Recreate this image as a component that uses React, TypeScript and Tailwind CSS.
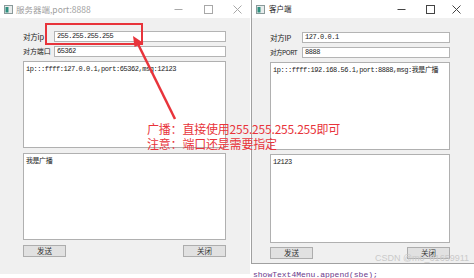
import React from "react";

const CJK = '"Noto Sans CJK SC", "Noto Sans", sans-serif';
const MONO = '"Liberation Mono", "Noto Sans CJK SC", monospace';

function WinIcon() {
  return (
    <svg width="9" height="9" viewBox="0 0 9 9" className="shrink-0">
      <rect x="0.5" y="0.5" width="8" height="8" fill="#e8ecec" stroke="#8a9a9a" />
      <rect x="1.5" y="2" width="3" height="5.5" fill="#2f8f7f" />
    </svg>
  );
}

function Controls({ color, gaps }: { color: string; gaps: [number, number] }) {
  return (
    <div className="flex items-center">
      <svg width="9" height="9" viewBox="0 0 9 9">
        <line x1="0.5" y1="4.5" x2="8.5" y2="4.5" stroke={color} strokeWidth="1" />
      </svg>
      <div style={{ width: gaps[0] }} />
      <svg width="9" height="9" viewBox="0 0 9 9">
        <rect x="0.5" y="0.5" width="8" height="8" fill="none" stroke={color} strokeWidth="1" />
      </svg>
      <div style={{ width: gaps[1] }} />
      <svg width="9" height="9" viewBox="0 0 9 9">
        <line x1="0.5" y1="0.5" x2="8.5" y2="8.5" stroke={color} strokeWidth="1" />
        <line x1="8.5" y1="0.5" x2="0.5" y2="8.5" stroke={color} strokeWidth="1" />
      </svg>
    </div>
  );
}

function Field({
  label,
  value,
  labelW,
  labelCls,
}: {
  label: string;
  value: string;
  labelW: number;
  labelCls: string;
}) {
  return (
    <div className="flex items-center h-[11px]">
      <div className="shrink-0 h-full flex items-center" style={{ width: labelW }}>
        <span className={`${labelCls} leading-none text-[#222] whitespace-nowrap`} style={{ fontFamily: CJK }}>
          {label}
        </span>
      </div>
      <div className="flex-1 h-full bg-white border border-[#b4b4b4] flex items-center pl-[2px]">
        <span
          className="text-[7px] leading-none text-[#222] whitespace-nowrap tracking-[-0.45px]"
          style={{ fontFamily: MONO }}
        >
          {value}
        </span>
      </div>
    </div>
  );
}

function Area({ text, h }: { text: string; h: number }) {
  return (
    <div className="bg-white border border-[#b0b0b0] px-[2px] pt-[3px]" style={{ height: h }}>
      <div
        className="text-[7px] leading-[9px] text-[#222] whitespace-nowrap tracking-[-0.45px]"
        style={{ fontFamily: MONO }}
      >
        {text}
      </div>
    </div>
  );
}

function Btn({ label }: { label: string }) {
  return (
    <div
      className="w-[43px] h-[12px] bg-[#e1e1e1] border border-[#adadad] flex items-center justify-center text-[7.5px] leading-none text-[#333]"
      style={{ fontFamily: CJK }}
    >
      {label}
    </div>
  );
}

export default function App() {
  return (
    <div className="relative w-[474px] h-[278px] bg-white overflow-hidden">
      {/* Left window (server) */}
      <div className="absolute left-0 top-0 w-[250px] h-[274px] bg-[#f0f0f0] flex flex-col">
        <div className="h-[18px] bg-white flex items-center pl-[4px] pr-[8px]">
          <WinIcon />
          <span
            className="ml-[3px] text-[8.5px] leading-none text-[#a0a0a0] whitespace-nowrap"
            style={{ fontFamily: CJK }}
          >
            服务器端,port:8888
          </span>
          <div className="flex-1" />
          <Controls color="#a8a8a8" gaps={[21, 20]} />
        </div>
        <div className="pl-[23px] pr-[24px] pt-[13px] flex flex-col">
          <div className="flex flex-col gap-[4px]">
            <Field label="对方ip" value="255.255.255.255" labelW={31} labelCls="text-[7.5px] tracking-[-0.2px]" />
            <Field label="对方端口" value="65362" labelW={31} labelCls="text-[7px] tracking-[-0.1px]" />
          </div>
          <div className="mt-[4px]">
            <Area text="ip:::ffff:127.0.0.1,port:65362,msg:12123" h={87} />
          </div>
          <div className="mt-[5px]">
            <Area text="我是广播" h={87} />
          </div>
          <div className="mt-[5px] flex justify-between">
            <Btn label="发送" />
            <Btn label="关闭" />
          </div>
        </div>
      </div>

      {/* Right window (client) */}
      <div className="absolute left-[251px] top-0 w-[223px] h-[264px] bg-[#f0f0f0] border-l border-b border-[#a0a0a0] flex flex-col">
        <div className="h-[18px] bg-white flex items-center pl-[4px] pr-[13px]">
          <WinIcon />
          <span
            className="ml-[4px] text-[7.5px] leading-none text-[#222] whitespace-nowrap"
            style={{ fontFamily: CJK }}
          >
            客户端
          </span>
          <div className="flex-1" />
          <Controls color="#444" gaps={[20, 17]} />
        </div>
        <div className="pl-[18px] pr-[24px] pt-[14px] flex flex-col">
          <div className="flex flex-col gap-[4px]">
            <Field label="对方IP" value="127.0.0.1" labelW={32} labelCls="text-[7.5px] tracking-[-0.2px]" />
            <Field label="对方PORT" value="8888" labelW={32} labelCls="text-[6.5px] tracking-[-0.45px]" />
          </div>
          <div className="mt-[4px]">
            <Area text="ip:::ffff:192.168.56.1,port:8888,msg:我是广播" h={88} />
          </div>
          <div className="mt-[4px]">
            <Area text="12123" h={89} />
          </div>
          <div className="mt-[4px] flex justify-between">
            <Btn label="发送" />
            <Btn label="关闭" />
          </div>
        </div>
        <div
          className="absolute right-[5px] bottom-[0px] text-[9px] leading-none text-[#cacaca] whitespace-nowrap"
          style={{ fontFamily: '"Liberation Sans", sans-serif' }}
        >
          CSDN @m0_61659911
        </div>
      </div>

      {/* code text peeking at the bottom */}
      <div
        className="absolute left-[253px] top-[271px] text-[8px] leading-none whitespace-nowrap text-[#6b3a8d]"
        style={{ fontFamily: MONO }}
      >
        showText4Menu.append(sbe);
      </div>

      {/* red highlight box */}
      <div className="absolute left-[45px] top-[23px] w-[98px] h-[22px] border-2 border-[#e8343b]" />

      {/* arrow */}
      <svg className="absolute left-0 top-0" width="474" height="278" viewBox="0 0 474 278">
        <line x1="175" y1="119" x2="137" y2="42" stroke="#e8343b" strokeWidth="2.5" />
        <polygon points="133,36 134.5,47 143.5,43" fill="#e8343b" />
      </svg>

      {/* annotation */}
      <div
        className="absolute left-[147px] top-[121px] text-[12px] leading-[15px] tracking-[-0.2px] text-[#e8343b] whitespace-nowrap"
        style={{ fontFamily: CJK }}
      >
        <div>广播：直接使用255.255.255.255即可</div>
        <div>注意：端口还是需要指定</div>
      </div>
    </div>
  );
}
